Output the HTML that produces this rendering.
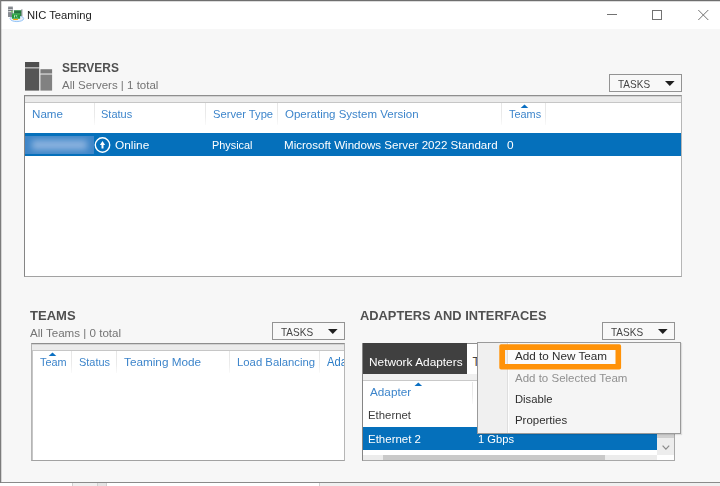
<!DOCTYPE html>
<html>
<head>
<meta charset="utf-8">
<title>NIC Teaming</title>
<style>
*{box-sizing:border-box;margin:0;padding:0}
html,body{width:720px;height:486px;overflow:hidden;background:#f7f7f7;font-family:"Liberation Sans",sans-serif;}
.abs{position:absolute}
#win{position:absolute;left:0;top:0;width:720px;height:486px;background:#f7f7f7;overflow:hidden}
.t{position:absolute;white-space:nowrap;transform-origin:0 0}
.r{position:absolute}
</style>
</head>
<body>
<div id="win">
  <!-- title bar -->
  <div class="r" style="left:0;top:0;width:720px;height:29px;background:#fff"></div>
  <div class="r" style="left:0;top:0;width:720px;height:1px;background:#6e6e6e"></div>
  <div class="r" style="left:1px;top:1px;width:719px;height:1px;background:rgba(140,140,140,.30)"></div>
  <!-- below-window strip -->
  <div class="r" style="left:0;top:483px;width:720px;height:3px;background:#fff"></div>
  <div class="r" style="left:72px;top:483px;width:25px;height:3px;background:#f0f0f0;border-left:1px solid #d0d0d0"></div>
  <div class="r" style="left:97px;top:483px;width:10px;height:3px;background:#e4e4e4;border-left:1px solid #d0d0d0;border-right:1px solid #d0d0d0"></div>
  <div class="r" style="left:319px;top:483px;width:401px;height:3px;background:#f0f0f0;border-left:1px solid #d0d0d0"></div>
  <div class="r" style="left:0;top:482px;width:720px;height:1px;background:#8a8a8a"></div>
  <div class="r" style="left:0;top:0;width:1px;height:483px;background:#7c7c7c"></div>
  <div class="r" style="left:1px;top:1px;width:1px;height:481px;background:rgba(150,150,150,.35)"></div>

  <!-- title icon -->
  <svg class="abs" style="left:4px;top:2px" width="26" height="24" viewBox="4 2 26 24">
    <ellipse cx="16.9" cy="18.6" rx="6.8" ry="3" fill="#e4f0fc" stroke="#8fc0f4" stroke-width="0.9"/>
    <rect x="8" y="6.5" width="4.9" height="10.4" rx="0.4" fill="#9599a0"/>
    <rect x="8" y="6.5" width="4.9" height="1" fill="#c9ccd0"/>
    <rect x="8.3" y="7.6" width="4.3" height="0.9" fill="#4e5359"/>
    <rect x="8.3" y="8.9" width="4.3" height="0.8" fill="#e8eaec"/>
    <rect x="8.3" y="10.1" width="4.3" height="0.8" fill="#6a6f75"/>
    <rect x="8.3" y="11.3" width="3" height="0.8" fill="#f1f2f3"/>
    <rect x="11.2" y="11.1" width="1.3" height="1.2" fill="#7be04a"/>
    <rect x="8" y="12.6" width="4.9" height="4.3" fill="#868b92"/>
    <rect x="13.9" y="10.2" width="7.8" height="5.8" fill="#2f7f49"/>
    <rect x="13.9" y="10.2" width="7.8" height="0.9" fill="#57a56c"/>
    <rect x="14.6" y="11.6" width="6.2" height="0.8" fill="#1f5c33"/>
    <rect x="21.4" y="9.2" width="1" height="7" fill="#8b9096"/>
    <rect x="11.9" y="13.6" width="8.2" height="5.2" rx="0.4" fill="#249a3c"/>
    <rect x="11.9" y="13.6" width="8.2" height="0.8" fill="#59bd6d"/>
    <path d="M14 15.2h1v2.4h-1zM15.6 15.2h1.6v0.8h-1.6zM16.6 16.2l1.4 1.4h-1l-1.2-1.2z" fill="#b9e6c2"/>
    <rect x="13.2" y="18.9" width="4.7" height="1.1" fill="#f0a800"/>
  </svg>

  <!-- window controls -->
  <svg class="abs" style="left:600px;top:0" width="120" height="30" viewBox="0 0 120 30">
    <path d="M7 14.5H17" stroke="#727272" stroke-width="1" fill="none"/>
    <rect x="52.5" y="10.5" width="9" height="9" stroke="#727272" stroke-width="1" fill="none"/>
    <path d="M98.3 10L108.3 20M108.3 10L98.3 20" stroke="#727272" stroke-width="1" fill="none"/>
  </svg>

  <!-- SERVERS icon -->
  <svg class="abs" style="left:24px;top:61px" width="30" height="31" viewBox="24 61 30 31">
    <rect x="25" y="62" width="14.2" height="5.2" fill="#4f4f4f"/>
    <rect x="25" y="67.2" width="14.2" height="1.2" fill="#a8a8a8"/>
    <rect x="25" y="68.4" width="14.2" height="22.2" fill="#565656"/>
    <rect x="40.4" y="69.2" width="11.7" height="4.4" fill="#7b7b7b"/>
    <rect x="40.4" y="73.6" width="11.7" height="1.2" fill="#bdbdbd"/>
    <rect x="40.4" y="74.8" width="11.7" height="15.8" fill="#818181"/>
  </svg>

  <!-- tasks buttons -->
  <div class="r" style="left:609px;top:74px;width:73px;height:18px;border:1px solid #939393;background:#f8f8f8;box-shadow:inset 0 0 0 1px rgba(255,255,255,.0)"></div>
  <svg class="abs" style="left:665px;top:81px" width="10" height="6" viewBox="0 0 10 6"><path d="M0 0H9.6L4.8 5Z" fill="#1f1f1f"/></svg>
  <div class="r" style="left:272px;top:322px;width:73px;height:18px;border:1px solid #939393;background:#f8f8f8;box-shadow:inset 0 0 0 1px rgba(255,255,255,.0)"></div>
  <svg class="abs" style="left:328px;top:329px" width="10" height="6" viewBox="0 0 10 6"><path d="M0 0H9.6L4.8 5Z" fill="#1f1f1f"/></svg>
  <div class="r" style="left:602px;top:322px;width:73px;height:18px;border:1px solid #939393;background:#f8f8f8;box-shadow:inset 0 0 0 1px rgba(255,255,255,.0)"></div>
  <svg class="abs" style="left:658px;top:329px" width="10" height="6" viewBox="0 0 10 6"><path d="M0 0H9.6L4.8 5Z" fill="#1f1f1f"/></svg>

  <!-- servers table -->
  <div class="r" style="left:24px;top:95px;width:658px;height:182px;background:#fff;border:1px solid;border-color:#8e8e8e #b6b6b6 #a2a2a2 #858585"></div>
  <div class="r" style="left:25px;top:96px;width:656px;height:7px;background:linear-gradient(#d2d2d2 0,#d2d2d2 1px,#ebebeb 1px);border-bottom:1px solid #c6c6c6"></div>
  <div class="r" style="left:94px;top:103px;width:1px;height:22px;background:linear-gradient(#e6e6e6,#ebebeb 60%,#fafafa)"></div>
  <div class="r" style="left:205px;top:103px;width:1px;height:22px;background:linear-gradient(#e6e6e6,#ebebeb 60%,#fafafa)"></div>
  <div class="r" style="left:277px;top:103px;width:1px;height:22px;background:linear-gradient(#e6e6e6,#ebebeb 60%,#fafafa)"></div>
  <div class="r" style="left:501px;top:103px;width:1px;height:22px;background:linear-gradient(#e6e6e6,#ebebeb 60%,#fafafa)"></div>
  <div class="r" style="left:545px;top:103px;width:1px;height:22px;background:linear-gradient(#e6e6e6,#ebebeb 60%,#fafafa)"></div>
  <!-- sort arrow -->
  <svg class="abs" style="left:519px;top:103px" width="11" height="6" viewBox="0 0 11 6"><path d="M1.7 5L5.5 1.4L9.3 5Z" fill="#0a6fc2"/></svg>
  <!-- selected row -->
  <div class="r" style="left:25px;top:133px;width:656px;height:23px;background:#0570bb"></div>
  <div class="r" style="left:25px;top:136px;width:69px;height:18px;background:#3f86c8"></div>
  <div class="r" style="left:25px;top:136px;width:69px;height:18px;overflow:hidden"><div class="r" style="left:7px;top:4px;width:55px;height:10px;background:#8ab2de;filter:blur(3px)"></div></div>
  <svg class="abs" style="left:94px;top:137px" width="17" height="17" viewBox="0 0 17 17">
    <circle cx="8.5" cy="8" r="7.2" fill="none" stroke="#fff" stroke-width="1.4"/>
    <path d="M8.5 4L11.1 8H9.5V11.4H7.5V8H5.9Z" fill="#fff"/>
  </svg>

  <!-- teams table -->
  <div class="r" style="left:31px;top:343px;width:314px;height:118px;background:#fff;border:1px solid;border-color:#8e8e8e #b6b6b6 #a2a2a2 #b4b4b4"></div>
  <div class="r" style="left:32px;top:344px;width:1px;height:116px;background:#c6c6c6"></div>
  <div class="r" style="left:32px;top:344px;width:312px;height:7px;background:linear-gradient(#d2d2d2 0,#d2d2d2 1px,#ebebeb 1px);border-bottom:1px solid #c6c6c6"></div>
  <div class="r" style="left:71px;top:351px;width:1px;height:22px;background:linear-gradient(#e6e6e6,#ebebeb 60%,#fafafa)"></div>
  <div class="r" style="left:116px;top:351px;width:1px;height:22px;background:linear-gradient(#e6e6e6,#ebebeb 60%,#fafafa)"></div>
  <div class="r" style="left:229px;top:351px;width:1px;height:22px;background:linear-gradient(#e6e6e6,#ebebeb 60%,#fafafa)"></div>
  <div class="r" style="left:319px;top:351px;width:1px;height:22px;background:linear-gradient(#e6e6e6,#ebebeb 60%,#fafafa)"></div>
  <svg class="abs" style="left:47px;top:351px" width="11" height="6" viewBox="0 0 11 6"><path d="M1.7 5L5.5 1.4L9.3 5Z" fill="#0a6fc2"/></svg>
  <div class="r" style="left:326px;top:355px;width:18px;height:14px;overflow:hidden"><div class="t" style="left:0.5px;top:0.8px;font-size:12px;line-height:12px;color:#2b7cc7;transform:scaleX(0.93)">Adapters</div></div>

  <!-- adapters box -->
  <div class="r" style="left:362px;top:343px;width:313px;height:118px;background:#fff;border:1px solid;border-color:#8e8e8e #a8a8a8 #a8a8a8 #858585"></div>
  <div class="r" style="left:363px;top:343px;width:104px;height:31px;background:#404040"></div>
  <div class="r" style="left:363px;top:374px;width:311px;height:7px;background:#efefef;border-bottom:1px solid #c9c9c9"></div>
  <div class="r" style="left:472px;top:357px;width:5px;height:12px;overflow:hidden"><div class="t" style="left:0.5px;top:-1.2px;font-size:12px;line-height:12px;color:#444">Team</div></div>
  <div class="r" style="left:472px;top:382px;width:1px;height:22px;background:linear-gradient(#e6e6e6,#ebebeb 60%,#fafafa)"></div>
  <svg class="abs" style="left:413px;top:381px" width="11" height="6" viewBox="0 0 11 6"><path d="M1.5 5L5.3 1.4L9.1 5Z" fill="#0a6fc2"/></svg>
  <!-- selected row -->
  <div class="r" style="left:363px;top:427px;width:294px;height:23px;background:#0570bb"></div>
  <!-- v scrollbar -->
  <div class="r" style="left:657px;top:381px;width:17px;height:74px;background:#ededed"></div>
  <div class="r" style="left:657px;top:420px;width:17px;height:18px;background:#cfcfcf"></div>
  <svg class="abs" style="left:660px;top:443px" width="12" height="9" viewBox="660 443 12 9"><path d="M662.6 445.6L665.9 449.2L669.2 445.6" stroke="#8a8a8a" stroke-width="1.2" fill="none"/></svg>
  <!-- h scrollbar -->
  <div class="r" style="left:363px;top:455px;width:294px;height:5px;background:#ececec"></div>
  <div class="r" style="left:383px;top:455px;width:222px;height:5px;background:#c9c9c9"></div>

  <!-- context menu -->
  <div class="r" style="left:477px;top:342px;width:204px;height:92px;background:#f5f5f5;border:1px solid #9a9a9a;box-shadow:1px 1px 1px rgba(0,0,0,.10)"></div>
  <div class="r" style="left:478px;top:343px;width:29px;height:90px;background:#f0f0f0"></div>
  <div class="r" style="left:507px;top:343px;width:1px;height:90px;background:#dedede"></div>
  <div class="r" style="left:508px;top:343px;width:1px;height:90px;background:#fdfdfd"></div>
  <!-- orange highlight -->
  <div class="r" style="left:509px;top:350px;width:107px;height:14px;background:#fbfbfb"></div>
  <svg class="abs" style="left:495px;top:340px" width="132" height="34" viewBox="495 340 132 34"><path fill="#ff9208" fill-rule="evenodd" d="M501.1 344.3H619.3A1.8 1.8 0 0 1 621.1 346.1V367.7A1.8 1.8 0 0 1 619.3 369.5H501.1A1.8 1.8 0 0 1 499.3 367.7V346.1A1.8 1.8 0 0 1 501.1 344.3ZM505 350V363.9H615.5V350Z"/></svg>

<div class="t" style="left:26.8px;top:9.2px;font-size:11.6px;line-height:11.6px;font-weight:normal;color:#222;transform:scaleX(0.9684);">NIC Teaming</div>
<div class="t" style="left:62.0px;top:61.3px;font-size:13px;line-height:13px;font-weight:bold;color:#505050;transform:scaleX(0.9191);">SERVERS</div>
<div class="t" style="left:62.0px;top:79.2px;font-size:11.6px;line-height:11.6px;font-weight:normal;color:#747474;transform:scaleX(0.9929);">All Servers | 1 total</div>
<div class="t" style="left:617.5px;top:77.9px;font-size:11.6px;line-height:11.6px;font-weight:normal;color:#444;transform:scaleX(0.8639);">TASKS</div>
<div class="t" style="left:32.3px;top:108.2px;font-size:11.6px;line-height:11.6px;font-weight:normal;color:#3d85cb;transform:scaleX(1.0020);">Name</div>
<div class="t" style="left:101.2px;top:108.2px;font-size:11.6px;line-height:11.6px;font-weight:normal;color:#3d85cb;transform:scaleX(0.9490);">Status</div>
<div class="t" style="left:212.5px;top:108.2px;font-size:11.6px;line-height:11.6px;font-weight:normal;color:#3d85cb;transform:scaleX(0.9647);">Server Type</div>
<div class="t" style="left:284.5px;top:108.2px;font-size:11.6px;line-height:11.6px;font-weight:normal;color:#3d85cb;transform:scaleX(0.9919);">Operating System Version</div>
<div class="t" style="left:508.5px;top:108.2px;font-size:11.6px;line-height:11.6px;font-weight:normal;color:#3d85cb;transform:scaleX(0.9398);">Teams</div>
<div class="t" style="left:115.3px;top:139.2px;font-size:11.6px;line-height:11.6px;font-weight:normal;color:#fff;transform:scaleX(1.0234);">Online</div>
<div class="t" style="left:211.8px;top:139.2px;font-size:11.6px;line-height:11.6px;font-weight:normal;color:#fff;transform:scaleX(0.9381);">Physical</div>
<div class="t" style="left:283.5px;top:139.2px;font-size:11.6px;line-height:11.6px;font-weight:normal;color:#fff;transform:scaleX(0.9984);">Microsoft Windows Server 2022 Standard</div>
<div class="t" style="left:507.0px;top:139.2px;font-size:11.6px;line-height:11.6px;font-weight:normal;color:#fff;transform:scaleX(1.0228);">0</div>
<div class="t" style="left:30.0px;top:309.1px;font-size:13px;line-height:13px;font-weight:bold;color:#505050;transform:scaleX(1.0022);">TEAMS</div>
<div class="t" style="left:30.0px;top:327.2px;font-size:11.6px;line-height:11.6px;font-weight:normal;color:#747474;transform:scaleX(1.0001);">All Teams | 0 total</div>
<div class="t" style="left:280.5px;top:325.9px;font-size:11.6px;line-height:11.6px;font-weight:normal;color:#444;transform:scaleX(0.8639);">TASKS</div>
<div class="t" style="left:39.5px;top:356.2px;font-size:11.6px;line-height:11.6px;font-weight:normal;color:#3d85cb;transform:scaleX(0.9380);">Team</div>
<div class="t" style="left:78.5px;top:356.2px;font-size:11.6px;line-height:11.6px;font-weight:normal;color:#3d85cb;transform:scaleX(0.9460);">Status</div>
<div class="t" style="left:123.5px;top:356.2px;font-size:11.6px;line-height:11.6px;font-weight:normal;color:#3d85cb;transform:scaleX(1.0138);">Teaming Mode</div>
<div class="t" style="left:236.5px;top:356.2px;font-size:11.6px;line-height:11.6px;font-weight:normal;color:#3d85cb;transform:scaleX(0.9770);">Load Balancing</div>
<div class="t" style="left:360.0px;top:309.1px;font-size:13px;line-height:13px;font-weight:bold;color:#505050;transform:scaleX(0.9880);">ADAPTERS AND INTERFACES</div>
<div class="t" style="left:610.5px;top:325.9px;font-size:11.6px;line-height:11.6px;font-weight:normal;color:#444;transform:scaleX(0.8639);">TASKS</div>
<div class="t" style="left:368.5px;top:356.2px;font-size:11.6px;line-height:11.6px;font-weight:normal;color:#fff;transform:scaleX(1.0228);">Network Adapters</div>
<div class="t" style="left:369.5px;top:386.2px;font-size:11.6px;line-height:11.6px;font-weight:normal;color:#3d85cb;transform:scaleX(1.0121);">Adapter</div>
<div class="t" style="left:368.1px;top:409.2px;font-size:11.6px;line-height:11.6px;font-weight:normal;color:#3c3c3c;transform:scaleX(0.9811);">Ethernet</div>
<div class="t" style="left:368.1px;top:432.7px;font-size:11.6px;line-height:11.6px;font-weight:normal;color:#fff;transform:scaleX(0.9907);">Ethernet 2</div>
<div class="t" style="left:478.1px;top:432.7px;font-size:11.6px;line-height:11.6px;font-weight:normal;color:#fff;transform:scaleX(0.9628);">1 Gbps</div>
<div class="t" style="left:515.1px;top:350.0px;font-size:11.6px;line-height:11.6px;font-weight:normal;color:#2e2e2e;transform:scaleX(1.0077);">Add to New Team</div>
<div class="t" style="left:515.1px;top:371.5px;font-size:11.6px;line-height:11.6px;font-weight:normal;color:#909090;transform:scaleX(0.9926);">Add to Selected Team</div>
<div class="t" style="left:515.1px;top:392.9px;font-size:11.6px;line-height:11.6px;font-weight:normal;color:#2e2e2e;transform:scaleX(0.9697);">Disable</div>
<div class="t" style="left:515.1px;top:414.3px;font-size:11.6px;line-height:11.6px;font-weight:normal;color:#2e2e2e;transform:scaleX(0.9859);">Properties</div>
</div>
</body>
</html>
